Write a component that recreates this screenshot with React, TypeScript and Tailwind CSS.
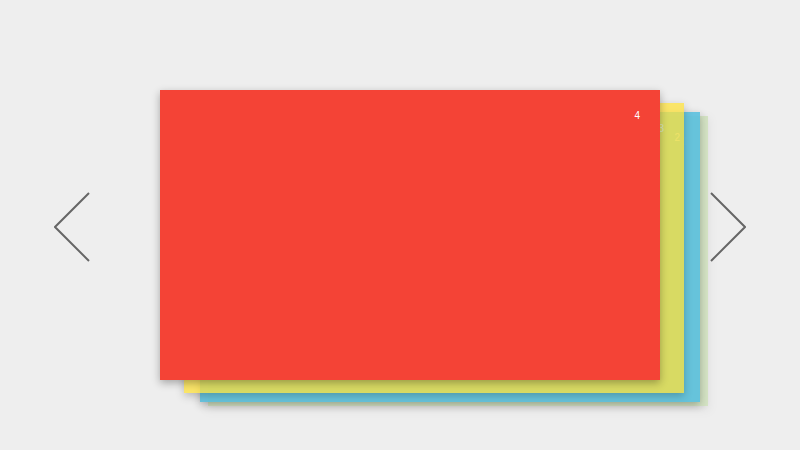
import React from 'react';

interface Card {
  id: number;
  className: string;
  label: string;
}

// stacked cards, back to front
const cards: Card[] = [
  { id: 1, className: 'left-[48px] top-[26px] bg-[#8bc34a] opacity-25', label: 'text-white/60' },
  { id: 2, className: 'left-[40px] top-[22px] bg-[#5bc0de] opacity-90', label: 'text-white/60' },
  { id: 3, className: 'left-[24px] top-[13px] bg-[#ffe23c] opacity-75', label: 'text-white/60' },
  { id: 4, className: 'left-0 top-0 bg-[#f44336]', label: 'text-white' },
];

const Chevron: React.FC<{ dir: 'left' | 'right' }> = ({ dir }) => (
  <button className="self-start mt-[192px] w-[36px] h-[70px] shrink-0">
    <svg width="36" height="70" viewBox="0 0 36 70" fill="none">
      <polyline
        points={dir === 'left' ? '35,1 1,35 35,69' : '1,1 35,35 1,69'}
        stroke="#666666"
        strokeWidth="2"
      />
    </svg>
  </button>
);

export default function App() {
  return (
    <div
      className="w-[800px] h-[450px] bg-[#eeeeee] flex items-start pl-[54px]"
      style={{ fontFamily: '"Liberation Sans", Arial, sans-serif' }}
    >
      <Chevron dir="left" />

      <div className="relative ml-[70px] mt-[90px] w-[548px] h-[316px] shrink-0">
        {cards.map((card) => (
          <div
            key={card.id}
            className={`absolute w-[500px] h-[290px] shadow-[0_3px_8px_rgba(0,0,0,0.3)] ${card.className}`}
          >
            <span className={`absolute top-[21px] right-[20px] text-[10px] leading-none ${card.label}`}>
              {card.id}
            </span>
          </div>
        ))}
      </div>

      <div className="ml-[2px]">
        <Chevron dir="right" />
      </div>
    </div>
  );
}
